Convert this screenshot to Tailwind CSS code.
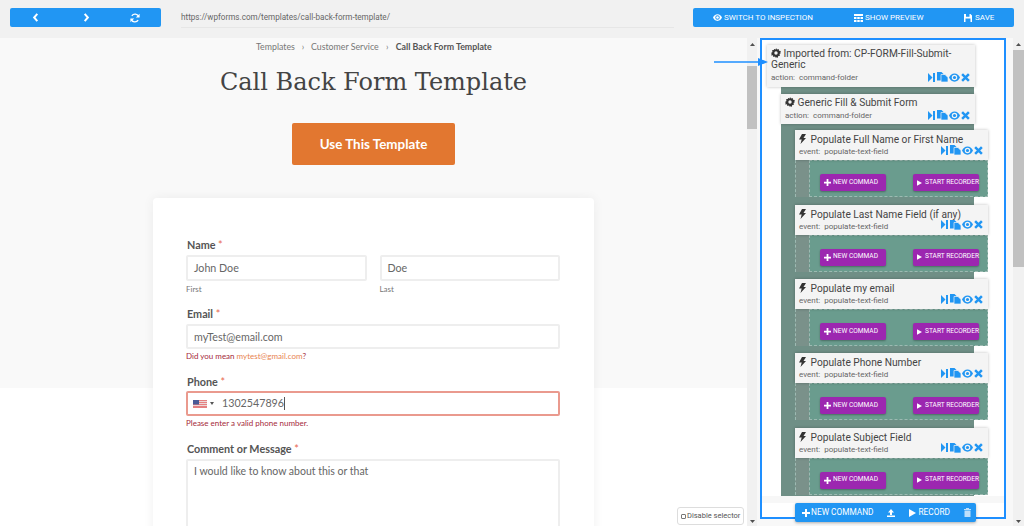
<!DOCTYPE html>
<html lang="en">
<head>
    <meta charset="UTF-8">
    <title>Call Back Form Template</title>
    <script src="https://cdn.jsdelivr.net/npm/@tailwindcss/browser@4"></script>
</head>
<body class="w-[1024px] h-[526px] overflow-hidden bg-white font-['Roboto',sans-serif]">

    <!-- Top toolbar -->
    <header class="h-[38px] bg-[#f1f1f1] flex items-start pt-[8px] pl-[10px]">
        <div class="w-[151px] h-[19px] bg-[#2196f3] rounded-[2px] flex items-center text-white">
            <span class="w-[50px] flex justify-center">
                <svg class="w-[7px] h-[9px]" viewBox="0 0 7 10"><path d="M5.5 1 2 5l3.5 4" fill="none" stroke="currentColor" stroke-width="2.2"/></svg>
            </span>
            <span class="w-[52px] flex justify-center">
                <svg class="w-[7px] h-[9px]" viewBox="0 0 7 10"><path d="M1.5 1 5 5 1.5 9" fill="none" stroke="currentColor" stroke-width="2.2"/></svg>
            </span>
            <span class="w-[46px] flex justify-center">
                <svg class="w-[10px] h-[10px]" viewBox="0 0 12 12"><path d="M10.5 4.500A4.700 4.700 0 0 0 2.200 3.400M1.500 7.500a4.700 4.700 0 0 0 8.300 1.100" fill="none" stroke="currentColor" stroke-width="1.600"/><path d="M11.500 1v4.500H7zM.5 11V6.500H5z" fill="currentColor"/></svg>
            </span>
        </div>
        <div class="ml-[20px] w-[493px] h-[20px] border-b border-[#e6e6e6] text-[8.15px] leading-[19px] text-[#666]">https://wpforms.com/templates/call-back-form-template/</div>
        <div class="ml-[19px] w-[321px] h-[19px] bg-[#2196f3] rounded-[2px] flex items-center text-white text-[8px] uppercase">
            <span class="ml-[20px] w-[120px] flex items-center gap-[2px]">
                <svg class="w-[9px] h-[7px]" viewBox="0 0 12 9"><path d="M6 0C3.200 0 1 2 0 4.500 1 7 3.200 9 6 9s5-2 6-4.500C11 2 8.800 0 6 0zm0 7.500a3 3 0 1 1 0-6 3 3 0 0 1 0 6z" fill="currentColor"/><circle cx="6" cy="4.500" r="1.700" fill="currentColor"/></svg>
                Switch to inspection
            </span>
            <span class="ml-[21px] w-[110px] flex items-center gap-[2px]">
                <svg class="w-[9px] h-[8px]" viewBox="0 0 9 8"><path d="M0 0h9v2H0zM0 3h2.500v2H0zM3.250 3h2.500v2h-2.500zM6.500 3H9v2H6.500zM0 6h2.500v2H0zM3.250 6h2.500v2h-2.500zM6.500 6H9v2H6.500z" fill="currentColor"/></svg>
                Show preview
            </span>
            <span class="flex items-center gap-[3px]">
                <svg class="w-[8px] h-[8px]" viewBox="0 0 8 8"><path d="M0 0h6.500L8 1.500V8H0zM2 0v2.800h3.500V0zM1.500 4.500V8h5V4.500z" fill="currentColor" fill-rule="evenodd"/></svg>
                Save
            </span>
        </div>
    </header>

    <div class="flex h-[488px] relative bg-[#f8f8f8]">
        <!-- Inspected page -->
        <main class="w-[747px] h-full overflow-hidden bg-[linear-gradient(#f9f9f9_350px,#ffffff_350px)] font-['Lato',sans-serif]">
            <nav class="pl-[256px] pt-[3px] h-[26px] flex text-[8.8px] leading-[11px] text-[#777]">
                <span>Templates</span>
                <span class="w-[16px] text-center">›</span>
                <span>Customer Service</span>
                <span class="w-[17px] text-center">›</span>
                <span class="font-bold text-[#555]">Call Back Form Template</span>
            </nav>
            <h1 class="text-center text-[24px] leading-[36px] text-[#444] font-['DejaVu_Serif',serif]">Call Back Form Template</h1>
            <div class="flex justify-center mt-[23px]">
                <div class="w-[163px] h-[42px] bg-[#e27730] rounded-[2px] text-white font-bold text-[13.4px] flex items-center justify-center">Use This Template</div>
            </div>
            <form class="ml-[153px] mt-[33px] w-[441px] h-[400px] bg-white rounded-[4px] shadow-[0_0_12px_rgba(0,0,0,0.06)] pt-[40px] px-[33px] text-[#666]">
                <div class="pl-px pb-[2px] text-[10.8px] font-bold leading-[13px] text-[#555]">Name <span class="text-[#e8694f] font-normal">*</span></div>
                <div class="mt-[2px] grid grid-cols-2 gap-[13px] w-[374px]">
                    <div>
                        <div class="h-[26px] border-2 border-[#eeeeee] rounded-[2px] pl-[6px] text-[10.7px] leading-[22px]">John Doe</div>
                        <div class="mt-[3px] text-[8px] leading-[11px] text-[#777]">First</div>
                    </div>
                    <div>
                        <div class="h-[26px] border-2 border-[#eeeeee] rounded-[2px] pl-[6px] text-[10.7px] leading-[22px]">Doe</div>
                        <div class="mt-[3px] text-[8px] leading-[11px] text-[#777]">Last</div>
                    </div>
                </div>
                <div class="pl-px pb-[2px] mt-[12px] text-[10.8px] font-bold leading-[13px] text-[#555]">Email <span class="text-[#e8694f] font-normal">*</span></div>
                <div class="mt-[2px] w-[374px] h-[25px] border-2 border-[#eeeeee] rounded-[2px] pl-[6px] text-[10.7px] leading-[21px]">myTest@email.com</div>
                <div class="mt-[2px] text-[8px] leading-[11px] text-[#a52a3a]">Did you mean <span class="text-[#e8834f]">mytest@gmail.com</span>?</div>
                <div class="pl-px pb-[2px] mt-[13px] text-[10.8px] font-bold leading-[13px] text-[#555]">Phone <span class="text-[#e8694f] font-normal">*</span></div>
                <div class="mt-[1px] w-[374px] h-[25px] border-2 border-[#ea9a8e] rounded-[2px] flex items-center text-[10.7px]">
                    <svg class="ml-[5px] w-[14px] h-[8px]" viewBox="0 0 14 8"><rect width="14" height="8" fill="#e58080"/><path d="M0 1.500h14M0 3.500h14M0 5.500h14" stroke="#eee" stroke-width=".8"/><rect width="6" height="4.500" fill="#4a5a96"/></svg>
                    <svg class="ml-[3px] w-[4px] h-[3px]" viewBox="0 0 4 3"><path d="M0 0h4L2 3z" fill="#555"/></svg>
                    <span class="ml-[8px]">1302547896</span><span class="w-px h-[13px] bg-[#555]"></span>
                </div>
                <div class="mt-[2px] text-[8px] leading-[11px] text-[#a52a3a]">Please enter a valid phone number.</div>
                <div class="pl-px pb-[2px] mt-[13px] text-[10.8px] font-bold leading-[13px] text-[#555]">Comment or Message <span class="text-[#e8694f] font-normal">*</span></div>
                <div class="mt-[2px] w-[374px] h-[100px] border-2 border-[#eeeeee] rounded-[2px] pl-[6px] pt-[3px] text-[10.5px] leading-[15px]">I would like to know about this or that</div>
            </form>
        </main>

        <!-- Left scrollbar -->
        <div class="w-[10px] h-full bg-[#f1f1f1] flex flex-col items-center">
            <svg class="mt-[5px] w-[5px] h-[3px]" viewBox="0 0 5 3"><path d="M0 3h5L2.500 0z" fill="#505050"/></svg>
            <div class="mt-[20px] w-full h-[63px] bg-[#c1c1c1]"></div>
            <svg class="mt-auto mb-[3px] w-[5px] h-[3px]" viewBox="0 0 5 3"><path d="M0 0h5L2.500 3z" fill="#505050"/></svg>
        </div>

        <!-- Command panel -->
        <aside class="w-[246px] h-[481px] ml-[3px] border-2 border-[#1e8fff] bg-[linear-gradient(#ffffff_456px,#f7f7f7_456px,#f7f7f7_463px,#ffffff_463px)] relative">
            <div class="pl-[5px] pt-[5px]">
                <div class="w-[208px] h-[42px] bg-[#f4f4f4] shadow-[0_0_3px_rgba(0,0,0,0.25)] px-[4px] pt-[3px] relative">
                    <div class="text-[10.2px] leading-[11px] text-[#444]">
                        <svg class="inline w-[10px] h-[10px] align-[-1px]" viewBox="0 0 10 10"><path d="M5 0l1 1.500 1.700-.5.300 1.800 1.800.3-.5 1.700L10 5l-1.500 1 .5 1.700-1.800.3-.3 1.800-1.700-.5L5 10l-1-1.500-1.700.5-.3-1.800L.2 7.400l.5-1.700L0 5l1.500-1-.5-1.700 1.800-.3L3.100.900l1.700.5zM5 3.300a1.700 1.700 0 1 0 0 3.400 1.700 1.700 0 0 0 0-3.400z" fill="#333" fill-rule="evenodd"/></svg>
                        Imported from: CP-FORM-Fill-Submit-Generic
                    </div>
                    <div class="text-[8px] leading-[10px] text-[#666] mt-[3px] whitespace-pre">action:  command-folder</div>
                    <div class="absolute right-[5px] bottom-[5px] flex items-center gap-[1px] text-[#2196f3]">
                        <svg class="w-[7px] h-[9px]" viewBox="0 0 7 9"><path d="M0 0l4.500 4.500L0 9zM5 0h2v9H5z" fill="currentColor"/></svg>
                        <svg class="ml-[1px] w-[11px] h-[10px]" viewBox="0 0 11 10"><path d="M0 0h4.500L6.500 2v6.500H0z" fill="currentColor"/><path d="M4 2.500h4L11 5.500V10H4z" fill="currentColor" stroke="#f4f4f4" stroke-width=".7"/></svg>
                        <svg class="w-[11px] h-[9px]" viewBox="0 0 12 9"><path d="M6 0C3.200 0 1 2 0 4.500 1 7 3.200 9 6 9s5-2 6-4.500C11 2 8.800 0 6 0zm0 7.500a3 3 0 1 1 0-6 3 3 0 0 1 0 6z" fill="currentColor"/><circle cx="6" cy="4.500" r="1.700" fill="currentColor"/></svg>
                        <svg class="w-[9px] h-[9px]" viewBox="0 0 8 8"><path d="M1 1l6 6M7 1 1 7" stroke="currentColor" stroke-width="2.200"/></svg>
                    </div>
                </div>

                <!-- Folder body -->
                <div class="ml-[14px] w-[193px] h-[409px] bg-[#6f8f86] pt-[7px]">
                    <div class="w-[194px] h-[30px] bg-[#f4f4f4] shadow-[0_0_3px_rgba(0,0,0,0.25)] px-[4px] pt-[3px] relative">
                        <div class="text-[10.2px] leading-[12px] text-[#444]">
                            <svg class="inline w-[10px] h-[10px] align-[-1px]" viewBox="0 0 10 10"><path d="M5 0l1 1.500 1.700-.5.300 1.800 1.800.3-.5 1.700L10 5l-1.500 1 .5 1.700-1.800.3-.3 1.800-1.700-.5L5 10l-1-1.500-1.700.5-.3-1.800L.2 7.400l.5-1.700L0 5l1.500-1-.5-1.700 1.800-.3L3.100.900l1.700.5zM5 3.300a1.700 1.700 0 1 0 0 3.400 1.700 1.700 0 0 0 0-3.400z" fill="#333" fill-rule="evenodd"/></svg>
                            Generic Fill &amp; Submit Form
                        </div>
                        <div class="text-[8px] leading-[10px] text-[#666] mt-[2px] whitespace-pre">action:  command-folder</div>
                        <div class="absolute right-[5px] bottom-[4px] flex items-center gap-[1px] text-[#2196f3]">
                            <svg class="w-[7px] h-[9px]" viewBox="0 0 7 9"><path d="M0 0l4.500 4.500L0 9zM5 0h2v9H5z" fill="currentColor"/></svg>
                            <svg class="ml-[1px] w-[11px] h-[10px]" viewBox="0 0 11 10"><path d="M0 0h4.500L6.500 2v6.500H0z" fill="currentColor"/><path d="M4 2.500h4L11 5.500V10H4z" fill="currentColor" stroke="#f4f4f4" stroke-width=".7"/></svg>
                            <svg class="w-[11px] h-[9px]" viewBox="0 0 12 9"><path d="M6 0C3.200 0 1 2 0 4.500 1 7 3.200 9 6 9s5-2 6-4.500C11 2 8.800 0 6 0zm0 7.500a3 3 0 1 1 0-6 3 3 0 0 1 0 6z" fill="currentColor"/><circle cx="6" cy="4.500" r="1.700" fill="currentColor"/></svg>
                            <svg class="w-[9px] h-[9px]" viewBox="0 0 8 8"><path d="M1 1l6 6M7 1 1 7" stroke="currentColor" stroke-width="2.200"/></svg>
                        </div>
                    </div>
                    <div id="events" class="ml-[14px] mt-[6.3px] flex flex-col gap-[7.4px]"></div>
                </div>
            </div>
            <div class="absolute left-[33px] top-[463px] w-[181px] h-[19px] bg-[#2196f3] rounded-[2px] shadow-[0_1px_3px_rgba(0,0,0,0.3)] flex items-center text-white text-[8.3px] uppercase">
                <svg class="ml-[7px] w-[8px] h-[8px]" viewBox="0 0 8 8"><path d="M3 0h2v3h3v2H5v3H3V5H0V3h3z" fill="currentColor"/></svg>
                <span class="ml-[1px]">New command</span>
                <svg class="ml-[13px] w-[8px] h-[8px]" viewBox="0 0 8 8"><path d="M4 0l3 3.500H5V6H3V3.500H1zM0 6.500h8V8H0z" fill="currentColor"/></svg>
                <svg class="ml-[14px] w-[7px] h-[8px]" viewBox="0 0 7 8"><path d="M0 0l7 4-7 4z" fill="currentColor"/></svg>
                <span class="ml-[3px]">Record</span>
                <svg class="ml-[14px] w-[7px] h-[9px] opacity-70" viewBox="0 0 7 9"><path d="M0 1h2V0h3v1h2v1H0zM.5 2.500h6V9h-6z" fill="currentColor"/></svg>
            </div>
        </aside>

        <!-- Right scrollbar -->
        <div class="ml-auto w-[11px] h-full bg-[#f1f1f1] flex flex-col items-center">
            <svg class="mt-[5px] w-[5px] h-[3px]" viewBox="0 0 5 3"><path d="M0 3h5L2.500 0z" fill="#505050"/></svg>
            <div class="mt-[4px] w-full h-[217px] bg-[#c1c1c1]"></div>
            <svg class="mt-auto mb-[3px] w-[5px] h-[3px]" viewBox="0 0 5 3"><path d="M0 0h5L2.500 3z" fill="#505050"/></svg>
        </div>

        <!-- Selector toggle -->
        <div class="absolute left-[677px] top-[469px] w-[67px] h-[18px] bg-white border border-[#ddd] rounded-[3px] flex items-center text-[7.500px] whitespace-nowrap text-[#555] pl-[3px] gap-[1px]">
            <span class="w-[5px] h-[5px] border border-[#777] rounded-[1px]"></span>Disable selector
        </div>

        <!-- Annotation arrow -->
        <svg class="absolute left-[714px] top-[20px] w-[54px] h-[8px]" viewBox="0 0 54 8"><path d="M0 4h46" stroke="#1e8fff" stroke-width="1.500"/><path d="M44 0l10 4-10 4z" fill="#1e8fff"/></svg>
    </div>

    <script>
        // event cards share one template
        var events = ['Populate Full Name or First Name', 'Populate Last Name Field (if any)', 'Populate my email', 'Populate Phone Number', 'Populate Subject Field'];
        var html = '';
        events.forEach(function (name) {
            html += '<div class="w-[193px]">' +
                '<div class="h-[30px] bg-[#f4f4f4] shadow-[0_0_3px_rgba(0,0,0,0.25)] px-[4px] pt-[4px] relative">' +
                    '<div class="text-[10.2px] leading-[12px] text-[#444]"><svg class="inline w-[7px] h-[10px] align-[-1px] mr-[2px]" viewBox="0 0 7 10"><path d="M3 0h4L4.500 4H7L1.500 10l1.200-4.500H0z" fill="#333"/></svg> ' + name + '</div>' +
                    '<div class="text-[8px] leading-[10px] text-[#666] mt-[1px] whitespace-pre">event:  populate-text-field</div>' +
                    '<div class="absolute right-[5px] bottom-[5px] flex items-center gap-[1px] text-[#2196f3]">' +
                        '<svg class="w-[7px] h-[9px]" viewBox="0 0 7 9"><path d="M0 0l4.500 4.500L0 9zM5 0h2v9H5z" fill="currentColor"/></svg>' +
                        '<svg class="ml-[1px] w-[11px] h-[10px]" viewBox="0 0 11 10"><path d="M0 0h4.500L6.500 2v6.500H0z" fill="currentColor"/><path d="M4 2.500h4L11 5.500V10H4z" fill="currentColor" stroke="#f4f4f4" stroke-width=".7"/></svg>' +
                        '<svg class="w-[11px] h-[9px]" viewBox="0 0 12 9"><path d="M6 0C3.200 0 1 2 0 4.500 1 7 3.200 9 6 9s5-2 6-4.500C11 2 8.800 0 6 0zm0 7.500a3 3 0 1 1 0-6 3 3 0 0 1 0 6z" fill="currentColor"/><circle cx="6" cy="4.500" r="1.700" fill="currentColor"/></svg>' +
                        '<svg class="w-[9px] h-[9px]" viewBox="0 0 8 8"><path d="M1 1l6 6M7 1 1 7" stroke="currentColor" stroke-width="2.200"/></svg>' +
                    '</div>' +
                '</div>' +
                '<div class="h-[37px] pl-[13px] bg-[#7a918a] border-l border-dashed border-[#9dbab2]"><div class="h-full bg-[#6a9c8e] border border-dashed border-[#9dbab2] flex items-start pt-[13px] text-white text-[6.6px] uppercase">' +
                    '<div class="ml-[10px] w-[66px] h-[17px] bg-[#9c27b0] rounded-[2px] shadow-[0_1px_2px_rgba(0,0,0,0.3)] flex items-center pl-[4px] gap-[2px]"><svg class="w-[7px] h-[7px]" viewBox="0 0 8 8"><path d="M3 0h2v3h3v2H5v3H3V5H0V3h3z" fill="currentColor"/></svg>New commad</div>' +
                    '<div class="ml-[27px] w-[66px] h-[17px] bg-[#9c27b0] rounded-[2px] shadow-[0_1px_2px_rgba(0,0,0,0.3)] flex items-center pl-[4px] gap-[3px] whitespace-nowrap"><svg class="w-[5px] h-[6px]" viewBox="0 0 7 8"><path d="M0 0l7 4-7 4z" fill="currentColor"/></svg>Start recorder</div>' +
                '</div></div>' +
            '</div>';
        });
        document.getElementById('events').innerHTML = html;
    </script>
</body>
</html>
